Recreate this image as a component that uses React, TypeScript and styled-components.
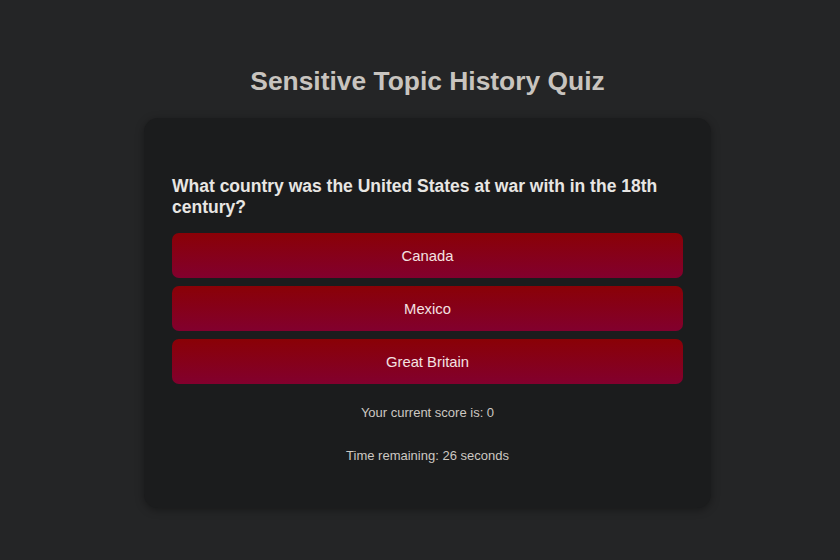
import React from "react";
import styled, { createGlobalStyle } from "styled-components";

const Global = createGlobalStyle`
  html, body { margin: 0; padding: 0; background: #242526; }
  body { font-family: "Liberation Sans", Arial, sans-serif; }
`;

const Page = styled.div`
  width: 840px;
  height: 560px;
  display: flex;
  flex-direction: column;
  align-items: center;
  box-sizing: border-box;
  padding: 64px 0 0 15px;
`;

const Title = styled.h1`
  margin: 0 0 20px;
  font-size: 26.4px;
  line-height: 34px;
  font-weight: bold;
  color: #c8c4bf;
`;

const Card = styled.div`
  width: 567px;
  box-sizing: border-box;
  background: #1b1c1d;
  border-radius: 14px;
  box-shadow: 0 2px 8px rgba(0, 0, 0, 0.35);
  padding: 58px 28px 43px;
  display: flex;
  flex-direction: column;
`;

const Question = styled.h2`
  margin: 0 0 15px;
  font-size: 17.5px;
  line-height: 21px;
  font-weight: bold;
  color: #e8e6e3;
`;

const Answers = styled.div`
  display: flex;
  flex-direction: column;
  gap: 8px;
`;

const Answer = styled.button`
  height: 45px;
  border: none;
  border-radius: 7px;
  background: linear-gradient(180deg, #8a0106 0%, #82002e 100%);
  color: #f4e2e2;
  font-family: "Liberation Sans", Arial, sans-serif;
  font-size: 14.8px;
  cursor: pointer;
`;

const Info = styled.p<{ $top: number }>`
  margin: ${(p) => p.$top}px 0 0;
  text-align: center;
  font-size: 13px;
  line-height: 18px;
  color: #cdc8c2;
`;

export default function App() {
  return (
    <>
      <Global />
      <Page>
        <Title>Sensitive Topic History Quiz</Title>
        <Card>
          <Question>What country was the United States at war with in the 18th century?</Question>
          <Answers>
            <Answer>Canada</Answer>
            <Answer>Mexico</Answer>
            <Answer>Great Britain</Answer>
          </Answers>
          <Info $top={20}>Your current score is: 0</Info>
          <Info $top={25}>Time remaining: 26 seconds</Info>
        </Card>
      </Page>
    </>
  );
}
